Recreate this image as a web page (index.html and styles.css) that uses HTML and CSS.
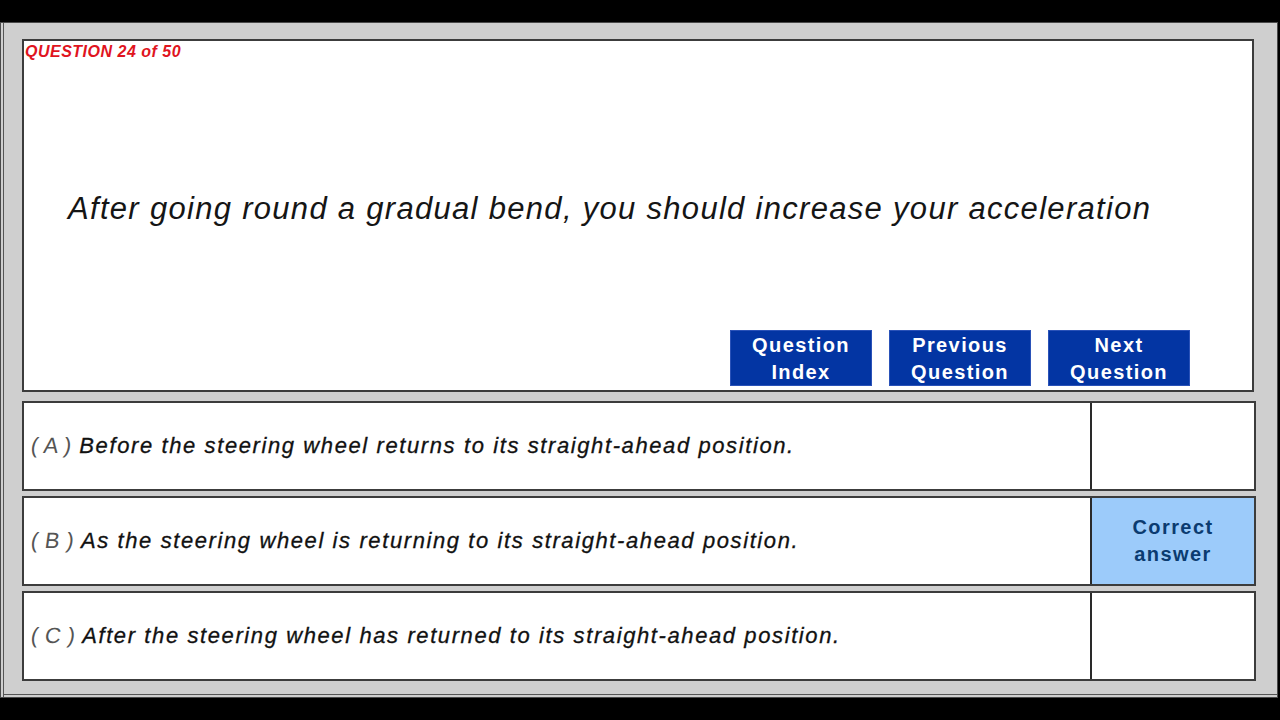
FILE: index.html
```html
<!DOCTYPE html>
<html>
<head>
<meta charset="utf-8">
<link rel="stylesheet" href="styles.css">
</head>
<body>
<div class="screen">
  <div class="panel">
    <div class="question-box">
      <div class="q-label">QUESTION 24 of 50</div>
      <div class="q-text">After going round a gradual bend, you should increase your acceleration</div>
      <div class="nav">
        <div class="btn">Question<br>Index</div>
        <div class="btn">Previous<br>Question</div>
        <div class="btn">Next<br>Question</div>
      </div>
    </div>
    <div class="options">
      <div class="opt">
        <div class="opt-text"><span class="letter">( A )</span> Before the steering wheel returns to its straight-ahead position.</div>
        <div class="opt-mark"></div>
      </div>
      <div class="opt">
        <div class="opt-text"><span class="letter">( B )</span> As the steering wheel is returning to its straight-ahead position.</div>
        <div class="opt-mark correct">Correct<br>answer</div>
      </div>
      <div class="opt">
        <div class="opt-text"><span class="letter">( C )</span> After the steering wheel has returned to its straight-ahead position.</div>
        <div class="opt-mark"></div>
      </div>
    </div>
  </div>
</div>
</body>
</html>
```

FILE: styles.css
```css
html, body {
  margin: 0;
  padding: 0;
  background: #000;
}
body {
  width: 1280px;
  height: 720px;
  overflow: hidden;
  font-family: "Liberation Sans", Arial, sans-serif;
}
.screen {
  padding-top: 22px;
}
.panel {
  box-sizing: border-box;
  width: 1278px;
  height: 676px;
  background: #cfcfcf;
  border: 1px solid #4a4a4a;
  box-shadow: inset 2px 0 0 #cfcfcf, inset 3px 0 0 #555, inset 0 -2px 0 #cfcfcf, inset 0 -3px 0 #555;
  padding: 16px 0 0 21px;
}
.question-box {
  box-sizing: border-box;
  width: 1232px;
  height: 353px;
  background: #fff;
  border: 2px solid #3c3c3c;
  display: flex;
  flex-direction: column;
}
.q-label {
  color: #e0141e;
  font-weight: bold;
  font-style: italic;
  font-size: 16px;
  letter-spacing: 0.5px;
  padding: 2px 0 0 1px;
  height: 21px;
}
.q-text {
  margin-top: 127px;
  padding-left: 44px;
  font-style: italic;
  font-size: 31px;
  color: #151515;
  letter-spacing: 1.3px;
  line-height: 36px;
}
.nav {
  margin-top: auto;
  display: flex;
  justify-content: flex-end;
  gap: 17px;
  padding: 0 62px 4px 0;
}
.btn {
  box-sizing: border-box;
  width: 142px;
  height: 56px;
  background: #0335a3;
  border: 1px solid #2a52b8;
  color: #fff;
  font-weight: bold;
  font-size: 20px;
  letter-spacing: 1.4px;
  line-height: 27px;
  text-align: center;
  padding-top: 1px;
}
.options {
  margin-top: 9px;
  display: flex;
  flex-direction: column;
  gap: 5px;
}
.opt {
  box-sizing: border-box;
  width: 1234px;
  height: 90px;
  background: #fff;
  border: 2px solid #3c3c3c;
  display: flex;
}
.opt-text {
  flex: 1;
  display: flex;
  align-items: center;
  padding-left: 7px;
  font-style: italic;
  font-size: 22px;
  color: #111;
  letter-spacing: 1.6px;
  -webkit-text-stroke: 0.3px #111;
  white-space: pre;
}
.letter {
  color: #555;
  font-style: normal;
  letter-spacing: 0.3px;
  -webkit-text-stroke: 0;
  transform: skewX(-8deg);
  display: inline-block;
}
.opt-mark {
  box-sizing: border-box;
  width: 164px;
  border-left: 2px solid #2a2a2a;
}
.opt-mark.correct {
  background: #9ccbfa;
  color: #0b3b70;
  font-weight: bold;
  font-size: 20px;
  letter-spacing: 1.4px;
  line-height: 27px;
  text-align: center;
  display: flex;
  align-items: center;
  justify-content: center;
}
```
